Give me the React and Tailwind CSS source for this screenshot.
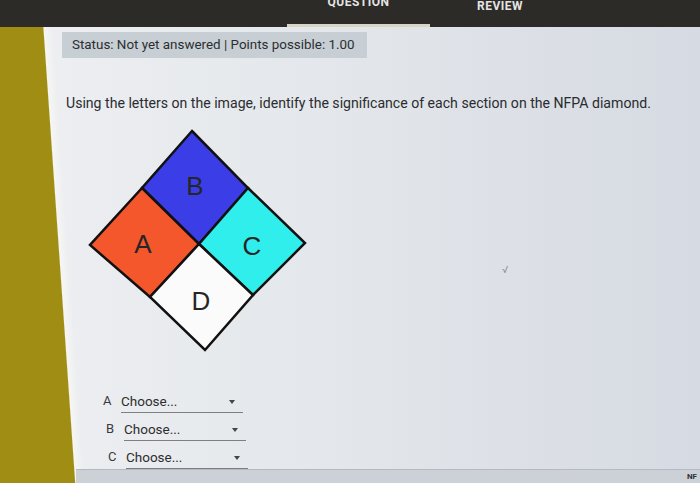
import React from 'react'

const font = { fontFamily: 'Roboto, "Liberation Sans", sans-serif' }

function Diamond() {
  // corners and edge midpoints, taken from the photo (slight perspective)
  const top = '106,5'
  const left = '4,119'
  const right = '219,117'
  const bottom = '119,224'
  const c = '113,118'
  const tl = '56,62'
  const tr = '162,62'
  const bl = '64,171'
  const br = '167,169'
  return (
    <svg width="224" height="228" viewBox="0 0 224 228" className="block">
      <g stroke="#111" strokeWidth="2.5" strokeLinejoin="miter">
        <polygon points={`${top} ${tr} ${c} ${tl}`} fill="#3b3ee6" />
        <polygon points={`${tl} ${c} ${bl} ${left}`} fill="#f4572c" />
        <polygon points={`${tr} ${right} ${br} ${c}`} fill="#30eeec" />
        <polygon points={`${c} ${br} ${bottom} ${bl}`} fill="#fbfbfb" />
      </g>
      <g fill="#262626" fontSize="26" fontFamily="Liberation Sans, Arial, sans-serif" textAnchor="middle">
        <text x="109" y="69">B</text>
        <text x="57" y="127">A</text>
        <text x="166" y="129">C</text>
        <text x="115" y="184">D</text>
      </g>
    </svg>
  )
}

function Choice({ letter, shift }) {
  return (
    <div className={`flex items-end h-[28px] ${shift}`}>
      <span className="w-[18px] text-[13px] text-[#3a3a3a] pb-[3px]">{letter}</span>
      <div className="w-[122px] h-[22px] flex items-center justify-between border-b border-[#7d7f82] pr-[8px]">
        <span className="text-[13.5px] text-[#2e2e2e]">Choose...</span>
        <span className="w-0 h-0 border-l-[3px] border-r-[3px] border-t-[4px] border-l-transparent border-r-transparent border-t-[#444]"></span>
      </div>
    </div>
  )
}

export default function App() {
  return (
    <div className="w-[700px] h-[483px] overflow-hidden relative flex flex-col bg-[#2d2b27]" style={font}>
      {/* top tab bar */}
      <div className="h-[27px] flex bg-[#2d2b27] shrink-0">
        <div className="w-[287px]"></div>
        <div className="w-[143px] flex justify-center border-b-[3px] border-[#d8d4c6]">
          <span className="-mt-[7px] text-[12px] font-bold tracking-[0.04em] text-[#e4e4e4]">QUESTION</span>
        </div>
        <div className="w-[140px] flex justify-center">
          <span className="-mt-[3px] text-[12px] font-bold tracking-[0.04em] text-[#e4e4e4]">REVIEW</span>
        </div>
      </div>

      {/* page body */}
      <div className="flex-1 min-h-0 flex flex-col bg-[image:linear-gradient(86deg,#a08d14_10.2%,#f6f6f3_10.35%,transparent_11.5%),linear-gradient(to_right,#eef0f2,#e4e7eb_45%,#d6dae2)]">
        <div className="ml-[62px] mt-[5px] w-[305px] h-[26px] flex items-center pl-[10px] bg-[#c7ced4]">
          <span className="text-[13.4px] text-[#2b2e31]">
            Status: Not yet answered | Points possible: 1.00
          </span>
        </div>

        <p className="ml-[66px] mt-[37px] text-[14.1px] leading-[17px] text-[#2a2c2f]">
          Using the letters on the image, identify the significance of each section on the NFPA diamond.
        </p>

        <div className="ml-[86px] mt-[14px]">
          <Diamond />
        </div>

        <div className="mt-[31px] flex flex-col">
          <Choice letter="A" shift="ml-[103px]" />
          <Choice letter="B" shift="ml-[106px]" />
          <Choice letter="C" shift="ml-[108px]" />
        </div>

        <div className="mt-auto ml-[76px] h-[14px] shrink-0 border-t border-[#b5b9c1] bg-[#ccd0d7] flex justify-end items-center pr-[3px]">
          <span className="text-[8px] font-bold text-[#333] leading-[9px]">NF</span>
        </div>
      </div>

      <span className="absolute left-[502px] top-[262px] text-[10px] text-[#8a8d92]">√</span>
    </div>
  )
}
